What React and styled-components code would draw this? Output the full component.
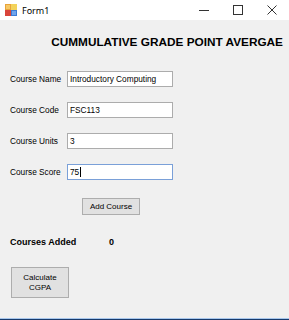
import styled, { createGlobalStyle } from 'styled-components'

const GlobalStyle = createGlobalStyle`
	html, body {
		margin: 0;
		padding: 0;
		background: #f0f0f0;
	}
	* {
		box-sizing: border-box;
	}
`

const fields = [
	{ label: 'Course Name', value: 'Introductory Computing' },
	{ label: 'Course Code', value: 'FSC113' },
	{ label: 'Course Units', value: '3' },
	{ label: 'Course Score', value: '75', focused: true },
]

export default function App() {
	return (
		<Window>
			<GlobalStyle />
			<TitleBar>
				<AppIcon viewBox='0 0 12 12'>
					<rect x='0' y='0' width='6' height='6' fill='#e8a33a' />
					<rect x='6' y='0' width='6' height='6' fill='#f3d35b' />
					<rect x='0' y='6' width='6' height='6' fill='#d9453b' />
					<rect x='6' y='6' width='6' height='6' fill='#3a7bd5' />
					<rect x='1' y='1' width='4' height='4' fill='#f6c866' />
					<rect x='7' y='7' width='4' height='4' fill='#6fa4ec' />
				</AppIcon>
				<Caption>Form1</Caption>
				<Controls>
					<ControlBox>
						<svg width='10' height='10' viewBox='0 0 10 10'>
							<line x1='0' y1='5.5' x2='10' y2='5.5' stroke='#333' strokeWidth='1' />
						</svg>
					</ControlBox>
					<ControlBox>
						<svg width='10' height='10' viewBox='0 0 10 10'>
							<rect x='0.5' y='0.5' width='9' height='9' fill='none' stroke='#333' strokeWidth='1' />
						</svg>
					</ControlBox>
					<ControlBox>
						<svg width='10' height='10' viewBox='0 0 10 10'>
							<line x1='0.5' y1='0.5' x2='9.5' y2='9.5' stroke='#333' strokeWidth='1' />
							<line x1='9.5' y1='0.5' x2='0.5' y2='9.5' stroke='#333' strokeWidth='1' />
						</svg>
					</ControlBox>
				</Controls>
			</TitleBar>
			<Body>
				<Heading>CUMMULATIVE GRADE POINT AVERGAE</Heading>
				<FieldGrid>
					{fields.map((f) => (
						<FieldRow key={f.label}>
							<Label>{f.label}</Label>
							<TextBox focused={f.focused}>
								{f.value}
								{f.focused && <Caret />}
							</TextBox>
						</FieldRow>
					))}
				</FieldGrid>
				<AddButton>Add Course</AddButton>
				<CountRow>
					<CountLabel>Courses Added</CountLabel>
					<CountValue>0</CountValue>
				</CountRow>
				<CalcButton>
					Calculate
					<br />
					CGPA
				</CalcButton>
			</Body>
		</Window>
	)
}

const Window = styled.div`
	width: 289px;
	height: 320px;
	display: flex;
	flex-direction: column;
	background: #f0f0f0;
	font-family: 'Liberation Sans', Arial, sans-serif;
	overflow: hidden;
`

const TitleBar = styled.div`
	height: 20px;
	background: #ffffff;
	display: flex;
	align-items: center;
	padding-left: 5px;
`

const AppIcon = styled.svg`
	width: 12px;
	height: 12px;
	flex-shrink: 0;
`

const Caption = styled.span`
	margin-left: 5px;
	font-size: 9px;
	color: #000;
	font-family: 'Noto Sans', 'Liberation Sans', sans-serif;
`

const Controls = styled.div`
	margin-left: auto;
	display: flex;
	height: 100%;
`

const ControlBox = styled.div`
	width: 34px;
	height: 100%;
	display: flex;
	align-items: center;
	justify-content: center;
	svg {
		display: block;
	}
`

const Body = styled.div`
	flex: 1;
	display: flex;
	flex-direction: column;
	border-bottom: 1px solid #a8c7ec;
	box-shadow: 0 1px 0 #173a6c;
	margin-bottom: 1px;
`

const Heading = styled.h1`
	margin: 15px 6px 0 0;
	align-self: flex-end;
	font-size: 11.8px;
	line-height: 14px;
	font-weight: 700;
	color: #000;
	white-space: nowrap;
`

const FieldGrid = styled.div`
	margin-top: 22px;
	padding-left: 10px;
	display: flex;
	flex-direction: column;
	gap: 15px;
`

const FieldRow = styled.div`
	display: grid;
	grid-template-columns: 57px 106px;
	align-items: center;
	height: 16px;
`

const Label = styled.span`
	font-size: 8.3px;
	color: #000;
	white-space: nowrap;
`

const TextBox = styled.div`
	height: 16px;
	background: #fff;
	border: 1px solid ${({ focused }) => (focused ? '#7aa0d8' : '#acacac')};
	font-size: 8.3px;
	line-height: 14px;
	padding-left: 2px;
	color: #000;
	display: flex;
	align-items: center;
	white-space: nowrap;
`

const Caret = styled.span`
	display: inline-block;
	width: 1px;
	height: 10px;
	background: #000;
	margin-left: 0.5px;
`

const WinButton = styled.div`
	background: #e1e1e1;
	border: 1px solid #adadad;
	font-size: 8px;
	color: #000;
	display: flex;
	align-items: center;
	justify-content: center;
	text-align: center;
	width: 58px;
`

const AddButton = styled(WinButton)`
	margin: 18px 0 0 82px;
	height: 17px;
`

const CountRow = styled.div`
	margin-top: 21px;
	padding-left: 10px;
	display: flex;
	align-items: center;
	height: 12px;
	font-size: 9px;
	font-weight: 700;
	color: #000;
`

const CountLabel = styled.span`
	width: 99px;
`

const CountValue = styled.span``

const CalcButton = styled(WinButton)`
	margin: 19px 0 0 11px;
	height: 31px;
	line-height: 10px;
`
